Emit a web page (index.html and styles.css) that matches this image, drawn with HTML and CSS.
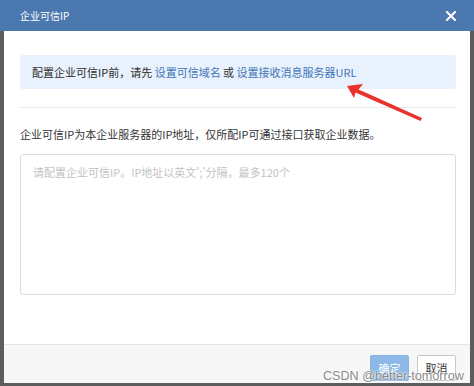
FILE: index.html
```html
<!DOCTYPE html>
<html lang="zh-CN">
<head>
<meta charset="utf-8">
<link rel="stylesheet" href="styles.css">
</head>
<body>
<div class="dialog">
  <div class="header">
    <span class="title">企业可信IP</span>
    <svg class="close" width="10" height="10" viewBox="0 0 10 10"><path d="M1 1L9 9M9 1L1 9" stroke="#fff" stroke-width="2" stroke-linecap="square"/></svg>
  </div>
  <div class="body">
    <div class="alert">配置企业可信IP前，请先 <a class="link">设置可信域名</a> 或 <a class="link">设置接收消息服务器URL</a></div>
    <div class="divider"></div>
    <p class="desc">企业可信IP为本企业服务器的IP地址，仅所配IP可通过接口获取企业数据。</p>
    <textarea class="ips" placeholder="请配置企业可信IP。IP地址以英文';'分隔，最多120个"></textarea>
  </div>
  <div class="footer">
    <button class="btn btn-primary">确定</button>
    <button class="btn btn-default">取消</button>
  </div>
  <svg class="arrow" width="474" height="386" viewBox="0 0 474 386">
    <polygon points="347,86 363,84 358.5,89.5 422,118 420.5,121 355.5,92.5 354,98" fill="#e8322c"/>
  </svg>
  <div class="watermark">CSDN @better-tomorrow</div>
</div>
</body>
</html>
```
FILE: styles.css
```css
* { box-sizing: border-box; }
html, body { margin: 0; padding: 0; }
body {
  width: 474px;
  height: 386px;
  overflow: hidden;
  background: #5d5d5d;
  font-family: "Noto Sans CJK SC", "Microsoft YaHei", sans-serif;
  color: #333;
}
.dialog {
  position: relative;
  width: 474px;
  height: 383px;
  display: flex;
  flex-direction: column;
}
.header {
  height: 31px;
  flex: none;
  background: #4b78ae;
  color: #fff;
  display: flex;
  align-items: center;
  justify-content: space-between;
  padding: 0 18px 0 20px;
}
.title { font-size: 10px; line-height: 14px; }
.close { display: block; }
.body {
  height: 313px;
  flex: none;
  margin: 0 4px;
  background: #fff;
  padding: 24px 14px 0 16px;
}
.alert {
  height: 34px;
  line-height: 34px;
  padding: 0 12px;
  background: #e8f1fc;
  border-radius: 3px;
  font-size: 11px;
  color: #2b2b2b;
  white-space: nowrap;
}
.link { color: #3d74b9; text-decoration: none; }
.divider {
  height: 1px;
  background: #ebebeb;
  margin-top: 18px;
}
.desc {
  margin: 16px 0 0;
  font-size: 11px;
  line-height: 20px;
  color: #333;
  white-space: nowrap;
}
.ips {
  display: block;
  width: 100%;
  height: 141px;
  margin-top: 10px;
  border: 1px solid #dcdcdc;
  border-radius: 3px;
  padding: 8px 12px;
  resize: none;
  font-family: "Noto Sans CJK SC", "Microsoft YaHei", sans-serif;
  font-size: 11px;
  line-height: 18px;
  color: #333;
  outline: none;
  background: #fff;
}
.ips::placeholder { color: #c2c2c2; }
.footer {
  flex: 1;
  margin: 0 4px;
  background: #f7f7f7;
  border-top: 1px solid #e6e6e6;
  display: flex;
  justify-content: flex-end;
  align-items: flex-start;
  gap: 8px;
  padding: 10px 14px 0 0;
}
.btn {
  width: 39px;
  height: 26px;
  border-radius: 2px;
  font-family: "Noto Sans CJK SC", "Microsoft YaHei", sans-serif;
  font-size: 11px;
  padding: 0;
  cursor: pointer;
}
.btn-primary {
  background: #8cb9e8;
  border: 1px solid #86b4e4;
  color: #fff;
}
.btn-default {
  background: #fff;
  border: 1px solid #c8c8c8;
  color: #333;
}
.arrow {
  position: absolute;
  left: 0;
  top: 0;
  pointer-events: none;
}
.watermark {
  position: absolute;
  left: 323px;
  top: 368px;
  font-family: "Liberation Sans", Arial, sans-serif;
  font-size: 12.6px;
  line-height: 16px;
  color: #8a8a8a;
  text-shadow: 0 0 2px #fff, 0 0 2px #fff;
  white-space: nowrap;
}
```
